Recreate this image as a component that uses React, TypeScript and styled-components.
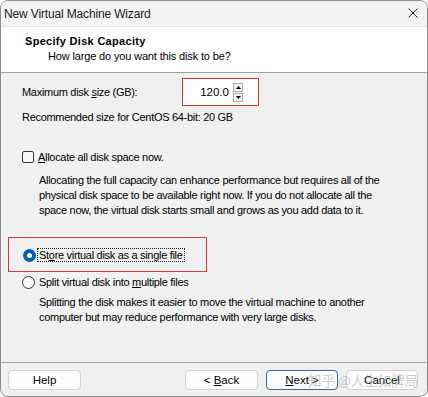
import React from "react"
import styled, { createGlobalStyle } from "styled-components"

const GlobalStyle = createGlobalStyle`
  html, body {
    margin: 0;
    padding: 0;
    background: #ffffff;
  }
  * { box-sizing: border-box; }
`

const App = () => {
  return (
    <>
      <GlobalStyle />
      <Window>
        <TitleBar>
          <TitleText>New Virtual Machine Wizard</TitleText>
          <CloseIcon viewBox="0 0 10 10">
            <path d="M0.5 0.5 L9.5 9.5 M9.5 0.5 L0.5 9.5" stroke="#2b2b2b" strokeWidth="1" fill="none" />
          </CloseIcon>
        </TitleBar>
        <Header>
          <HeaderTitle>Specify Disk Capacity</HeaderTitle>
          <HeaderSub>How large do you want this disk to be?</HeaderSub>
        </Header>
        <Body>
          <SizeRow>
            <SizeLabel>Maximum disk <u>s</u>ize (GB):</SizeLabel>
            <SizeBox>
              <SizeValue>120.0</SizeValue>
              <Spinner>
                <SpinBtn><Tri viewBox="0 0 5 3"><path d="M0 3 L2.5 0 L5 3 Z" fill="#000" /></Tri></SpinBtn>
                <SpinBtn><Tri viewBox="0 0 5 3"><path d="M0 0 L2.5 3 L5 0 Z" fill="#000" /></Tri></SpinBtn>
              </Spinner>
            </SizeBox>
          </SizeRow>
          <Line $top={4}>Recommended size for CentOS 64-bit: 20 GB</Line>

          <OptionRow $top={26}>
            <CheckBox />
            <span><u>A</u>llocate all disk space now.</span>
          </OptionRow>
          <Para $top={9}>
            Allocating the full capacity can enhance performance but requires all of the<br />
            physical disk space to be available right now. If you do not allocate all the<br />
            space now, the virtual disk starts small and grows as you add data to it.
          </Para>

          <Highlight>
            <OptionRow $top={0}>
              <Radio $checked />
              <FocusLabel>St<u>o</u>re virtual disk as a single file</FocusLabel>
            </OptionRow>
          </Highlight>
          <OptionRow $top={3}>
            <Radio />
            <span>Split virtual disk into <u>m</u>ultiple files</span>
          </OptionRow>
          <Para $top={6}>
            Splitting the disk makes it easier to move the virtual machine to another<br />
            computer but may reduce performance with very large disks.
          </Para>
        </Body>
        <Footer>
          <Button><span>Help</span></Button>
          <Spacer />
          <ButtonGroup>
            <Button><span>&lt; <u>B</u>ack</span></Button>
            <Button $primary><span><u>N</u>ext &gt;</span></Button>
            <Button><span>Cancel</span></Button>
          </ButtonGroup>
          <Watermark>知乎 @人生如牌局</Watermark>
        </Footer>
      </Window>
    </>
  )
}

export default App

const Window = styled.div`
  width: 428px;
  height: 397px;
  border: 1px solid #8c8c8c;
  border-radius: 8px;
  overflow: hidden;
  display: flex;
  flex-direction: column;
  font-family: "Liberation Sans", Arial, sans-serif;
  font-size: 11px;
  color: #000;
  background: #f0f0f0;
`
const TitleBar = styled.div`
  height: 26px;
  flex: none;
  display: flex;
  align-items: center;
  justify-content: space-between;
  padding: 0 9px 0 3px;
  background: #f3f3f3;
  border-bottom: 1px solid #e2e2e2;
`
const TitleText = styled.div`
  font-size: 12px;
  letter-spacing: -0.15px;
  color: #1a1a1a;
`
const CloseIcon = styled.svg`
  width: 10px;
  height: 10px;
  margin-top: -1px;
`
const Header = styled.div`
  height: 46px;
  flex: none;
  background: #ffffff;
  border-bottom: 1px solid #a0a0a0;
  padding: 7px 0 0 24px;
`
const HeaderTitle = styled.div`
  font-weight: bold;
  letter-spacing: 0.3px;
  line-height: 14px;
`
const HeaderSub = styled.div`
  margin: 1px 0 0 23px;
  letter-spacing: -0.15px;
  line-height: 14px;
`
const Body = styled.div`
  flex: 1;
  padding: 5px 0 0 0;
  letter-spacing: -0.3px;
`
const SizeRow = styled.div`
  display: flex;
  align-items: center;
  height: 28px;
  padding-left: 21px;
`
const SizeLabel = styled.div`
  width: 160px;
`
const SizeBox = styled.div`
  width: 77px;
  height: 28px;
  border: 1px solid #d0393b;
  background: #ffffff;
  display: flex;
  align-items: center;
  justify-content: flex-end;
  padding-right: 15px;
  gap: 4px;
`
const SizeValue = styled.div`
  font-size: 11.5px;
  letter-spacing: 0;
`
const Spinner = styled.div`
  display: flex;
  flex-direction: column;
  gap: 1px;
`
const SpinBtn = styled.div`
  width: 10px;
  height: 9px;
  border: 1px solid #adadad;
  background: #f4f4f4;
  display: flex;
  align-items: center;
  justify-content: center;
`
const Tri = styled.svg`
  width: 5px;
  height: 3px;
`
const Line = styled.div<{ $top: number }>`
  margin-top: ${p => p.$top}px;
  padding-left: 21px;
  line-height: 14px;
`
const OptionRow = styled.div<{ $top: number }>`
  margin-top: ${p => p.$top}px;
  display: flex;
  align-items: center;
  gap: 4px;
  height: 14px;
  padding-left: 21px;
`
const CheckBox = styled.div`
  width: 12px;
  height: 12px;
  border: 1px solid #333;
  border-radius: 2px;
  background: #f8f8f8;
`
const Radio = styled.div<{ $checked?: boolean }>`
  width: 13px;
  height: 13px;
  border-radius: 50%;
  border: ${p => (p.$checked ? "none" : "1px solid #333")};
  background: ${p => (p.$checked ? "#0062b5" : "#f8f8f8")};
  display: flex;
  align-items: center;
  justify-content: center;
  &::after {
    content: "";
    display: ${p => (p.$checked ? "block" : "none")};
    width: 5px;
    height: 5px;
    border-radius: 50%;
    background: #ffffff;
  }
`
const FocusLabel = styled.span`
  outline: 1px dotted #222;
  outline-offset: 0px;
  margin-left: -2px;
  padding: 0 1px;
`
const Para = styled.div<{ $top: number }>`
  margin-top: ${p => p.$top}px;
  padding-left: 38px;
  line-height: 15px;
  white-space: nowrap;
`
const Highlight = styled.div`
  margin: 19px 0 0 7px;
  width: 199px;
  height: 35px;
  border: 1px solid #d0393b;
  padding-top: 10px;
  & > div {
    padding-left: 14px;
  }
`
const Footer = styled.div`
  position: relative;
  height: 34px;
  flex: none;
  border-top: 1px solid #a0a0a0;
  display: flex;
  align-items: flex-start;
  padding: 7px 9px 0 7px;
`
const Spacer = styled.div`
  flex: 1;
`
const ButtonGroup = styled.div`
  display: flex;
  gap: 8px;
`
const Button = styled.div<{ $primary?: boolean }>`
  width: 72px;
  height: 20px;
  display: flex;
  align-items: center;
  justify-content: center;
  background: #fdfdfd;
  border: 1px solid ${p => (p.$primary ? "#2f6a92" : "#d0d0d0")};
  border-radius: 4px;
  font-size: 11.5px;
  white-space: pre;
  &:first-child {
    width: 73px;
  }
`
const Watermark = styled.div`
  position: absolute;
  left: 307px;
  top: 9px;
  font-family: "Noto Sans CJK SC", sans-serif;
  font-size: 13.5px;
  line-height: 16px;
  color: rgba(160, 160, 160, 0.55);
  pointer-events: none;
  white-space: nowrap;
`
